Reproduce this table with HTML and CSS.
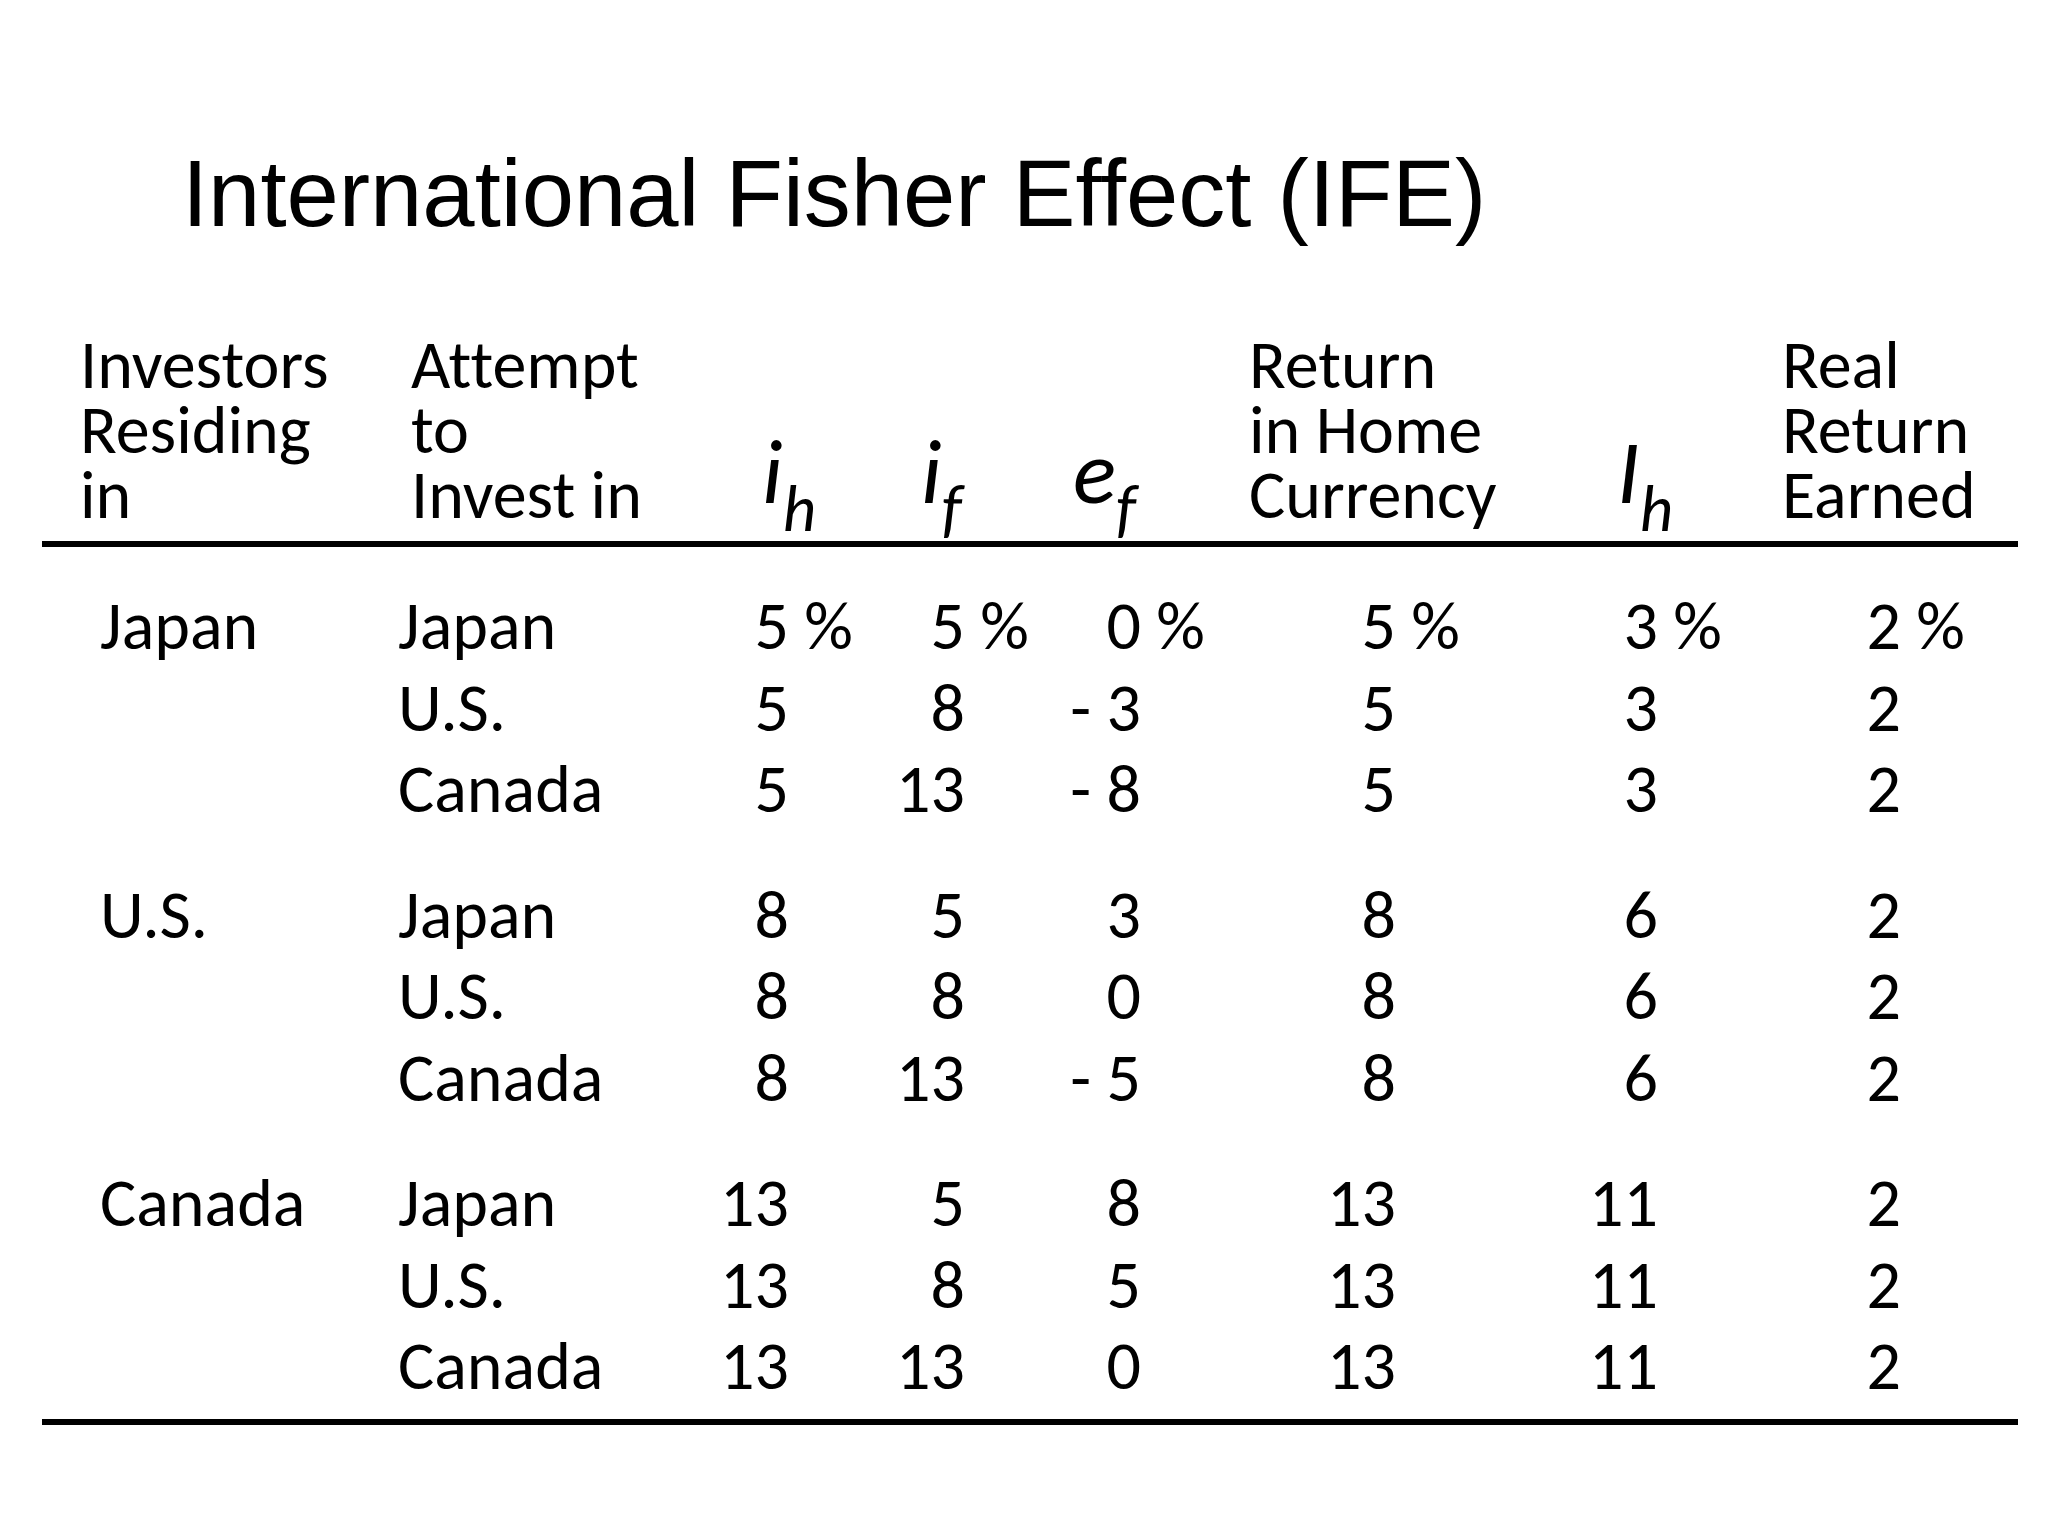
FILE: index.html
```html
<!DOCTYPE html>
<html lang="en">
<head>
<meta charset="utf-8">
<title>International Fisher Effect (IFE)</title>
<link rel="stylesheet" href="styles.css">
</head>
<body>
<main class="slide">
  <h1 class="title">International Fisher Effect (IFE)</h1>
  <section class="table">
    <div class="cols head">
      <div class="hcell c1">Investors<br>Residing<br>in</div>
      <div class="hcell c2">Attempt<br>to<br>Invest in</div>
      <div class="math c3"><i>i</i><sub>h</sub></div>
      <div class="math c4"><i>i</i><sub>f</sub></div>
      <div class="math c5"><i>e</i><sub>f</sub></div>
      <div class="hcell c6">Return<br>in Home<br>Currency</div>
      <div class="math c7"><i>I</i><sub>h</sub></div>
      <div class="hcell c8">Real<br>Return<br>Earned</div>
    </div>
    <div class="tbody">
      <div class="group">
        <div class="cols row">
          <div class="c1 txt">Japan</div><div class="c2 txt">Japan</div>
          <div class="c3 num"><span class="n">5</span> %</div>
          <div class="c4 num"><span class="n">5</span> %</div>
          <div class="c5 num"><span class="n">0</span> %</div>
          <div class="c6 num"><span class="n">5</span> %</div>
          <div class="c7 num"><span class="n">3</span> %</div>
          <div class="c8 num"><span class="n">2</span> %</div>
        </div>
        <div class="cols row">
          <div class="c1 txt"></div><div class="c2 txt">U.S.</div>
          <div class="c3 num"><span class="n">5</span></div>
          <div class="c4 num"><span class="n">8</span></div>
          <div class="c5 num"><span class="n">- 3</span></div>
          <div class="c6 num"><span class="n">5</span></div>
          <div class="c7 num"><span class="n">3</span></div>
          <div class="c8 num"><span class="n">2</span></div>
        </div>
        <div class="cols row">
          <div class="c1 txt"></div><div class="c2 txt">Canada</div>
          <div class="c3 num"><span class="n">5</span></div>
          <div class="c4 num"><span class="n">13</span></div>
          <div class="c5 num"><span class="n">- 8</span></div>
          <div class="c6 num"><span class="n">5</span></div>
          <div class="c7 num"><span class="n">3</span></div>
          <div class="c8 num"><span class="n">2</span></div>
        </div>
      </div>
      <div class="group">
        <div class="cols row">
          <div class="c1 txt">U.S.</div><div class="c2 txt">Japan</div>
          <div class="c3 num"><span class="n">8</span></div>
          <div class="c4 num"><span class="n">5</span></div>
          <div class="c5 num"><span class="n">3</span></div>
          <div class="c6 num"><span class="n">8</span></div>
          <div class="c7 num"><span class="n">6</span></div>
          <div class="c8 num"><span class="n">2</span></div>
        </div>
        <div class="cols row">
          <div class="c1 txt"></div><div class="c2 txt">U.S.</div>
          <div class="c3 num"><span class="n">8</span></div>
          <div class="c4 num"><span class="n">8</span></div>
          <div class="c5 num"><span class="n">0</span></div>
          <div class="c6 num"><span class="n">8</span></div>
          <div class="c7 num"><span class="n">6</span></div>
          <div class="c8 num"><span class="n">2</span></div>
        </div>
        <div class="cols row">
          <div class="c1 txt"></div><div class="c2 txt">Canada</div>
          <div class="c3 num"><span class="n">8</span></div>
          <div class="c4 num"><span class="n">13</span></div>
          <div class="c5 num"><span class="n">- 5</span></div>
          <div class="c6 num"><span class="n">8</span></div>
          <div class="c7 num"><span class="n">6</span></div>
          <div class="c8 num"><span class="n">2</span></div>
        </div>
      </div>
      <div class="group">
        <div class="cols row">
          <div class="c1 txt">Canada</div><div class="c2 txt">Japan</div>
          <div class="c3 num"><span class="n">13</span></div>
          <div class="c4 num"><span class="n">5</span></div>
          <div class="c5 num"><span class="n">8</span></div>
          <div class="c6 num"><span class="n">13</span></div>
          <div class="c7 num"><span class="n">11</span></div>
          <div class="c8 num"><span class="n">2</span></div>
        </div>
        <div class="cols row">
          <div class="c1 txt"></div><div class="c2 txt">U.S.</div>
          <div class="c3 num"><span class="n">13</span></div>
          <div class="c4 num"><span class="n">8</span></div>
          <div class="c5 num"><span class="n">5</span></div>
          <div class="c6 num"><span class="n">13</span></div>
          <div class="c7 num"><span class="n">11</span></div>
          <div class="c8 num"><span class="n">2</span></div>
        </div>
        <div class="cols row">
          <div class="c1 txt"></div><div class="c2 txt">Canada</div>
          <div class="c3 num"><span class="n">13</span></div>
          <div class="c4 num"><span class="n">13</span></div>
          <div class="c5 num"><span class="n">0</span></div>
          <div class="c6 num"><span class="n">13</span></div>
          <div class="c7 num"><span class="n">11</span></div>
          <div class="c8 num"><span class="n">2</span></div>
        </div>
      </div>
    </div>
  </section>
</main>
</body>
</html>
```

FILE: styles.css
```css
* {
  box-sizing: border-box;
  margin: 0;
  padding: 0;
}

html,
body {
  background: #ffffff;
}

body {
  width: 2048px;
  height: 1536px;
  overflow: hidden;
  color: #000000;
  font-family: Carlito, Calibri, Lato, "Liberation Sans", sans-serif;
  font-variant-ligatures: none;
  font-feature-settings: "liga" 0, "clig" 0;
}

.slide {
  padding-top: 147px;
}

.title {
  font-family: "Liberation Sans", Arial, sans-serif;
  font-weight: normal;
  font-size: 94px;
  line-height: 94px;
  padding-left: 182px;
  white-space: nowrap;
}

.table {
  margin: 91px 0 0 42px;
  width: 1976px;
}

.cols {
  display: grid;
  grid-template-columns: 348px 310px 170px 170px 190px 290px 220px 278px;
}

/* header */
.head {
  align-items: end;
  border-bottom: 6px solid #000000;
  padding-bottom: 14px;
  font-size: 68px;
  line-height: 65px;
}

.hcell {
  white-space: nowrap;
}

.head .c1 { padding-left: 38px; }
.head .c2 { padding-left: 21px; }
.head .c6 { padding-left: 19px; }
.head .c8 { padding-left: 42px; }

.math {
  font-size: 90px;
  line-height: 90px;
  padding-bottom: 10px;
  white-space: nowrap;
}

.math i {
  font-style: italic;
}

.math sub {
  font-size: 65px;
  font-style: italic;
  line-height: 0;
  vertical-align: -28px;
}

.head .c3 { padding-left: 62px; }
.head .c4 { padding-left: 51px; }
.head .c5 { padding-left: 33px; }
.head .c7 { padding-left: 97px; }

/* body */
.tbody {
  padding: 38px 0 12px;
  border-bottom: 6px solid #000000;
  font-size: 68px;
  line-height: 81.5px;
}

.group + .group {
  margin-top: 44px;
}

.txt {
  white-space: nowrap;
}

.row .c1 { padding-left: 58px; }
.row .c2 { padding-left: 8px; }

.num {
  white-space: nowrap;
}

.n {
  display: inline-block;
  text-align: right;
}

.c3 .n { width: 89px; }
.c4 .n { width: 95px; }
.c5 .n { width: 101px; }
.c6 .n { width: 166px; }
.c7 .n { width: 138px; }
.c8 .n { width: 161px; }
```
